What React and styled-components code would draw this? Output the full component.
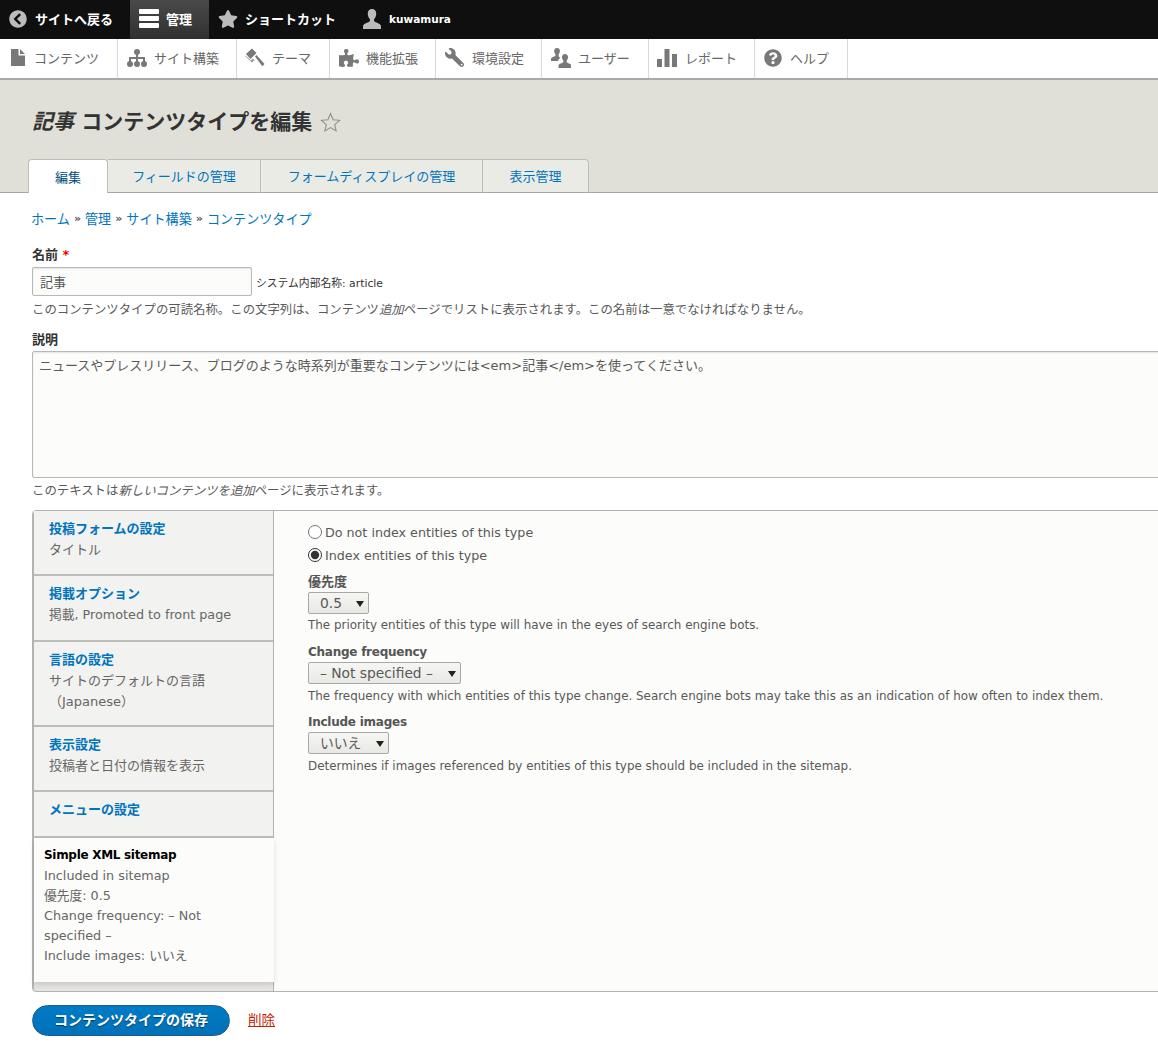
import styled, { createGlobalStyle } from 'styled-components';
import { FaChevronCircleLeft, FaStar, FaPuzzlePiece, FaWrench, FaQuestionCircle } from 'react-icons/fa';

const FONT = '"DejaVu Sans", "Noto Sans CJK JP", sans-serif';

const GlobalStyle = createGlobalStyle`
  html, body {
    margin: 0;
    padding: 0;
    background: #fff;
    overflow-x: hidden;
  }
  body {
    font-family: ${FONT};
    font-size: 13px;
    color: #333;
  }
  * { box-sizing: border-box; }
`;

const Page = styled.div`
  width: 1158px;
  height: 1056px;
  overflow: hidden;
`;

const TopBar = styled.nav`
  display: flex;
  height: 39px;
  background: #0f0f0f;
`;

const TopItem = styled.a`
  display: flex;
  align-items: center;
  width: ${({ $w }) => $w}px;
  padding-left: ${({ $pad }) => $pad || 9}px;
  padding-bottom: 2px;
  gap: ${({ $gap }) => $gap || 8}px;
  color: #fff;
  font-size: 13px;
  font-weight: 700;
  white-space: nowrap;
  background: ${({ $active }) => ($active ? 'linear-gradient(#4a4a4a, #303030)' : 'none')};
  svg { color: #bbb; flex: none; }
`;

const UserName = styled.span`
  font-size: 10.500px;
`;

const BurgerIcon = () => (
  <svg width="20" height="19" viewBox="0 0 20 19" style={{ color: '#fff' }}>
    <rect y="0" width="20" height="5" rx="1" fill="currentColor" />
    <rect y="7" width="20" height="5" rx="1" fill="currentColor" />
    <rect y="14" width="20" height="5" rx="1" fill="currentColor" />
  </svg>
);

const UserIcon = ({ size = 20 }) => (
  <svg width={size} height={size} viewBox="0 0 20 20">
    <path
      fill="currentColor"
      d="M10 0c-3 0-4.400 2.400-4.200 5.200.1 2 1 3.800 2.100 4.900v1.600c0 .7-1 1.200-3 2C2.600 14.700 1 15.500 1 17.500V20h18v-2.500c0-2-1.600-2.800-3.900-3.800-2-.8-3-1.300-3-2v-1.600c1.100-1.100 2-2.900 2.100-4.900C14.400 2.400 13 0 10 0z"
    />
  </svg>
);

const Tray = styled.nav`
  display: flex;
  height: 41px;
  background: #fff;
  border-bottom: 2px solid #a9a9a5;
`;

const TrayItem = styled.a`
  display: flex;
  align-items: center;
  gap: ${({ $gap }) => $gap || 9}px;
  width: ${({ $w }) => $w}px;
  padding-left: ${({ $pad }) => $pad || 11}px;
  padding-bottom: 2px;
  border-right: 1px solid #d9d9d9;
  color: #666;
  font-size: 13px;
  white-space: nowrap;
  svg { color: #787878; flex: none; }
`;

const FlippedWrench = styled(FaWrench)`
  transform: scaleX(-1);
`;

const FileIcon = () => (
  <svg width="14" height="17" viewBox="0 0 14 17">
    <path fill="currentColor" d="M0 0h7.500v6.500H14V17H0zM9 0l5 5H9z" />
  </svg>
);

const TreeIcon = () => (
  <svg width="20" height="18" viewBox="0 0 20 18">
    <circle cx="10" cy="3" r="3" fill="currentColor" />
    <circle cx="3" cy="15" r="3" fill="currentColor" />
    <circle cx="10" cy="15" r="3" fill="currentColor" />
    <circle cx="17" cy="15" r="3" fill="currentColor" />
    <path fill="none" stroke="currentColor" strokeWidth="2" d="M10 5v8M3 13V9h14v4" />
  </svg>
);

const BrushIcon = () => (
  <svg width="20" height="20" viewBox="0 0 20 20">
    <path fill="currentColor" d="M1 6l6-5.500 4.500 4.500-6 6z" />
    <path fill="currentColor" opacity=".75" d="M0.500 7.500l5.500 5 2-2 1.500 1.500-2.500 2.500-6.500-6z" />
    <path fill="currentColor" d="M10 8.500l1.500-1.500 8 9-2.200 2.200z" />
  </svg>
);

const PeopleIcon = () => (
  <svg width="20" height="20" viewBox="0 0 20 20">
    <path
      fill="currentColor"
      d="M6 0C4 0 3 1.500 3.200 3.300c.1 1.200.7 2.300 1.300 3v1.200C4.500 8.500 0 9 0 11v2h7c.5-1.700 1.700-2.500 2.600-3.200-1-.5-2-.9-2-1.800V6.300c.6-.7 1.200-1.800 1.300-3C9.100 1.500 8 0 6 0zM14 6c-2 0-3.200 1.600-3 3.500.1 1.300.7 2.400 1.400 3.200v1.200c0 1-4.900 1.600-4.900 3.600V20h13v-2.500c0-2-4.900-2.600-4.900-3.600v-1.200c.7-.8 1.300-1.900 1.400-3.200.2-1.900-1-3.500-3-3.500z"
    />
  </svg>
);

const BarsIcon = () => (
  <svg width="20" height="18" viewBox="0 0 20 18">
    <rect x="0" y="10" width="5" height="8" fill="currentColor" />
    <rect x="7.500" y="0" width="5" height="18" fill="currentColor" />
    <rect x="15" y="5" width="5" height="13" fill="currentColor" />
  </svg>
);

const Header = styled.header`
  height: 113px;
  padding: 0 0 0 28px;
  background: #e0e0d8;
  border-bottom: 1px solid #a6a6a6;
  display: flex;
  flex-direction: column;
  justify-content: flex-end;
`;

const TitleRow = styled.div`
  display: flex;
  align-items: center;
  gap: 8px;
  padding-left: 4px;
  margin-bottom: 22px;
`;

const Title = styled.h1`
  margin: 0;
  font-size: 21px;
  line-height: 30px;
  font-weight: 700;
  color: #333;
  white-space: nowrap;
  em { font-style: italic; }
`;

const StarOutline = () => (
  <svg width="21" height="21" viewBox="0 0 20 20">
    <path
      fill="none"
      stroke="#8e8e84"
      d="M10 1.500l2.500 5.800 6.200.6-4.700 4.100 1.400 6.100L10 14.900l-5.400 3.200L6 12 1.300 7.900l6.200-.6z"
    />
  </svg>
);

const Tabs = styled.div`
  display: flex;
  height: 34px;
  margin-bottom: -1px;
`;

const Tab = styled.a`
  display: flex;
  align-items: center;
  justify-content: center;
  width: ${({ $w }) => $w}px;
  padding-bottom: 1px;
  font-size: 13px;
  color: ${({ $active }) => ($active ? '#004f80' : '#0074bd')};
  background: ${({ $active }) => ($active ? '#fff' : '#ebebe5')};
  border: 1px solid #bfbfba;
  border-left: ${({ $first }) => ($first ? '1px solid #bfbfba' : 'none')};
  border-bottom: ${({ $active }) => ($active ? 'none' : '1px solid #a6a6a6')};
  border-radius: ${({ $first, $last }) => ($first ? '4px 4px 0 0' : $last ? '0 4px 0 0' : '0')};
`;

const Content = styled.main`
  width: 1300px;
  padding: 0 0 0 32px;
`;

const Breadcrumb = styled.div`
  display: flex;
  align-items: center;
  gap: 4px;
  height: 20px;
  margin: 15px 0 0 -1px;
  font-size: 13.100px;
  a { color: #0074bd; }
  span { font-size: 11px; font-weight: 700; color: #555; }
`;

const Label = styled.label`
  display: block;
  margin-top: ${({ $mt }) => $mt || 0}px;
  font-size: 13px;
  font-weight: 700;
  line-height: 18px;
  color: #333;
  i { font-style: normal; color: #e00; }
`;

const NameField = styled.div`
  display: flex;
  align-items: center;
  gap: 4px;
  margin-top: 3px;
`;

const TextInput = styled.input`
  width: 220px;
  height: 29px;
  padding: 0 7px;
  border: 1px solid #b8b8b8;
  border-radius: 2px;
  background: #fcfcfa;
  color: #595959;
  font: 13px ${FONT};
  box-shadow: inset 0 1px 2px rgba(0, 0, 0, 0.1);
`;

const MachineName = styled.span`
  font-size: 10.800px;
  color: #333;
`;

const Help = styled.div`
  font-size: 12.400px;
  line-height: 18px;
  color: #595959;
  white-space: nowrap;
  margin-top: ${({ $mt }) => $mt || 3}px;
  em { font-style: italic; }
`;

const TextArea = styled.textarea`
  display: block;
  width: 1200px;
  height: 127px;
  margin-top: 2px;
  padding: 5px 6px;
  border: 1px solid #b8b8b8;
  border-radius: 2px;
  background: #fcfcfa;
  color: #595959;
  font: 13px/18px ${FONT};
  resize: none;
  box-shadow: inset 0 1px 2px rgba(0, 0, 0, 0.1);
`;

const VerticalTabs = styled.section`
  display: flex;
  width: 1200px;
  height: 482px;
  margin-top: 10px;
  border: 1px solid #b3b3b3;
  border-radius: 4px 0 0 4px;
  background: #fcfcfa;
`;

const TabRail = styled.div`
  flex: none;
  width: 241px;
  background: #e6e5e1;
  border-right: 1px solid #b3b3b3;
  border-left: 1px solid #b3b3b3;
  border-radius: 4px 0 0 4px;
`;

const RailItem = styled.div`
  height: ${({ $h }) => $h}px;
  padding: ${({ $active }) => ($active ? '8px 15px 0 10px' : '9px 15px 0')};
  background: ${({ $active }) => ($active ? '#fcfcfa' : '#f2f2f0')};
  border-bottom: ${({ $active }) => ($active ? 'none' : '2px solid #bcbcb8')};
  margin-right: ${({ $active }) => ($active ? '-1px' : '0')};
  position: relative;
  box-shadow: ${({ $active }) => ($active ? '0 3px 5px rgba(0, 0, 0, 0.12)' : 'none')};
`;

const RailTitle = styled.div`
  font-size: ${({ $active }) => ($active ? 12 : 13)}px;
  letter-spacing: ${({ $active }) => ($active ? '-0.3px' : '0')};
  line-height: 18px;
  font-weight: 700;
  color: ${({ $active }) => ($active ? '#000' : '#0074bd')};
  margin-bottom: ${({ $active }) => ($active ? 2 : 1)}px;
`;

const RailSummary = styled.div`
  font-size: ${({ $latin }) => ($latin ? 12.75 : 13)}px;
  line-height: ${({ $lh }) => $lh || 20}px;
  color: #666;
`;

const Pane = styled.div`
  flex: 1;
  padding: 10px 0 0 34px;
  color: #595959;
`;

const RadioRow = styled.label`
  display: flex;
  align-items: center;
  gap: 3px;
  height: 23px;
  font-size: 12.700px;
  color: #595959;
  white-space: nowrap;
  input {
    width: 14px;
    height: 14px;
    margin: 0 0 2px;
    accent-color: #333;
  }
`;

const PaneLabel = styled(Label)`
  color: #555;
  font-size: ${({ $latin }) => ($latin ? 12 : 13)}px;
  letter-spacing: ${({ $latin }) => ($latin ? '-0.25px' : '0')};
`;

const SelectWrap = styled.div`
  position: relative;
  width: ${({ $w }) => $w}px;
  height: 22px;
  margin-top: 1px;
  &::after {
    content: '';
    position: absolute;
    right: 5px;
    top: 9px;
    border-left: 4px solid transparent;
    border-right: 4px solid transparent;
    border-top: 6px solid #222;
    pointer-events: none;
  }
`;

const Select = styled.select`
  appearance: none;
  width: 100%;
  height: 100%;
  padding: 0 0 0 11px;
  border: 1px solid #a8a8a8;
  border-radius: 2px;
  background: linear-gradient(#f6f6f3, #e8e8e4);
  color: #595959;
  font: 13.800px ${FONT};
`;

const PaneHelp = styled.div`
  font-size: 11.930px;
  line-height: 18px;
  margin-top: ${({ $mt }) => $mt || 2}px;
  color: #595959;
  white-space: nowrap;
`;

const Actions = styled.div`
  display: flex;
  align-items: center;
  gap: 18px;
  margin-top: 13px;
`;

const SaveButton = styled.button`
  width: 198px;
  height: 31px;
  padding: 0 0 3px;
  border: 1px solid #1e5c90;
  border-radius: 20px;
  background: linear-gradient(#007bc6, #0071b8);
  color: #fff;
  font: 700 14px ${FONT};
  text-shadow: 0 1px 1px rgba(0, 0, 0, 0.5);
`;

const DeleteLink = styled.a`
  margin-bottom: 3px;
  color: #c72100;
  font-size: 13.500px;
  text-decoration: underline;
`;

const topItems = [
  { label: 'サイトへ戻る', w: 130, icon: <FaChevronCircleLeft size={18} /> },
  { label: '管理', w: 79, active: true, icon: <BurgerIcon />, gap: 7 },
  { label: 'ショートカット', w: 141, icon: <FaStar size={20} />, gap: 7 },
  { label: 'kuwamura', w: 200, pad: 12, icon: <UserIcon />, gap: 7, small: true },
];

const trayItems = [
  { label: 'コンテンツ', w: 118, icon: <FileIcon />, pad: 11, gap: 9 },
  { label: 'サイト構築', w: 119, icon: <TreeIcon />, pad: 9, gap: 7 },
  { label: 'テーマ', w: 93, icon: <BrushIcon />, pad: 8, gap: 7 },
  { label: '機能拡張', w: 106, icon: <FaPuzzlePiece size={20} />, pad: 9, gap: 7 },
  { label: '環境設定', w: 106, icon: <FlippedWrench size={19} />, pad: 9, gap: 8 },
  { label: 'ユーザー', w: 107, icon: <PeopleIcon />, pad: 9, gap: 7 },
  { label: 'レポート', w: 106, icon: <BarsIcon />, pad: 8, gap: 8 },
  { label: 'ヘルプ', w: 93, icon: <FaQuestionCircle size={18} />, pad: 9, gap: 8 },
];

const tabs = [
  { label: '編集', w: 80 },
  { label: 'フィールドの管理', w: 153 },
  { label: 'フォームディスプレイの管理', w: 222 },
  { label: '表示管理', w: 106 },
];

const rail = [
  { title: '投稿フォームの設定', lines: ['タイトル'], h: 65 },
  { title: '掲載オプション', lines: ['掲載, Promoted to front page'], h: 66, latin: true },
  { title: '言語の設定', lines: ['サイトのデフォルトの言語', '（Japanese）'], h: 85 },
  { title: '表示設定', lines: ['投稿者と日付の情報を表示'], h: 65 },
  { title: 'メニューの設定', lines: [], h: 46 },
];

const sitemapLines = [
  'Included in sitemap',
  '優先度: 0.5',
  'Change frequency: – Not',
  'specified –',
  'Include images: いいえ',
];

export default function App() {
  return (
    <Page>
      <GlobalStyle />
      <TopBar>
        {topItems.map((item) => (
          <TopItem key={item.label} $w={item.w} $pad={item.pad} $gap={item.gap} $active={item.active}>
            {item.icon}
            {item.small ? <UserName>{item.label}</UserName> : item.label}
          </TopItem>
        ))}
      </TopBar>
      <Tray>
        {trayItems.map((item) => (
          <TrayItem key={item.label} $w={item.w} $pad={item.pad} $gap={item.gap}>
            {item.icon}
            {item.label}
          </TrayItem>
        ))}
      </Tray>
      <Header>
        <TitleRow>
          <Title>
            <em>記事</em> コンテンツタイプを編集
          </Title>
          <StarOutline />
        </TitleRow>
        <Tabs>
          {tabs.map((tab, i) => (
            <Tab key={tab.label} $w={tab.w} $active={i === 0} $first={i === 0} $last={i === tabs.length - 1}>
              {tab.label}
            </Tab>
          ))}
        </Tabs>
      </Header>
      <Content>
        <Breadcrumb>
          <a>ホーム</a>
          <span>»</span>
          <a>管理</a>
          <span>»</span>
          <a>サイト構築</a>
          <span>»</span>
          <a>コンテンツタイプ</a>
        </Breadcrumb>
        <Label $mt={18}>
          名前 <i>*</i>
        </Label>
        <NameField>
          <TextInput defaultValue="記事" />
          <MachineName>システム内部名称: article</MachineName>
        </NameField>
        <Help $mt={5}>
          このコンテンツタイプの可読名称。この文字列は、コンテンツ<em>追加</em>ページでリストに表示されます。この名前は一意でなければなりません。
        </Help>
        <Label $mt={12}>説明</Label>
        <TextArea defaultValue="ニュースやプレスリリース、ブログのような時系列が重要なコンテンツには<em>記事</em>を使ってください。" />
        <Help $mt={4}>
          このテキストは<em>新しいコンテンツを追加</em>ページに表示されます。
        </Help>
        <VerticalTabs>
          <TabRail>
            {rail.map((item) => (
              <RailItem key={item.title} $h={item.h}>
                <RailTitle>{item.title}</RailTitle>
                {item.lines.map((line) => (
                  <RailSummary key={line} $lh={21} $latin={item.latin}>
                    {line}
                  </RailSummary>
                ))}
              </RailItem>
            ))}
            <RailItem $active $h={144}>
              <RailTitle $active>Simple XML sitemap</RailTitle>
              {sitemapLines.map((line) => (
                <RailSummary key={line} $latin>
                  {line}
                </RailSummary>
              ))}
            </RailItem>
          </TabRail>
          <Pane>
            <RadioRow>
              <input type="radio" name="index" />
              Do not index entities of this type
            </RadioRow>
            <RadioRow>
              <input type="radio" name="index" defaultChecked />
              Index entities of this type
            </RadioRow>
            <PaneLabel $mt={6}>優先度</PaneLabel>
            <SelectWrap $w={61}>
              <Select>
                <option>0.5</option>
              </Select>
            </SelectWrap>
            <PaneHelp>The priority entities of this type will have in the eyes of search engine bots.</PaneHelp>
            <PaneLabel $mt={9} $latin>
              Change frequency
            </PaneLabel>
            <SelectWrap $w={153}>
              <Select>
                <option>– Not specified –</option>
              </Select>
            </SelectWrap>
            <PaneHelp $mt={3}>
              The frequency with which entities of this type change. Search engine bots may take this as an indication of how often to index them.
            </PaneHelp>
            <PaneLabel $mt={8} $latin>
              Include images
            </PaneLabel>
            <SelectWrap $w={81}>
              <Select>
                <option>いいえ</option>
              </Select>
            </SelectWrap>
            <PaneHelp $mt={3}>Determines if images referenced by entities of this type should be included in the sitemap.</PaneHelp>
          </Pane>
        </VerticalTabs>
        <Actions>
          <SaveButton>コンテンツタイプの保存</SaveButton>
          <DeleteLink>削除</DeleteLink>
        </Actions>
      </Content>
    </Page>
  );
}
